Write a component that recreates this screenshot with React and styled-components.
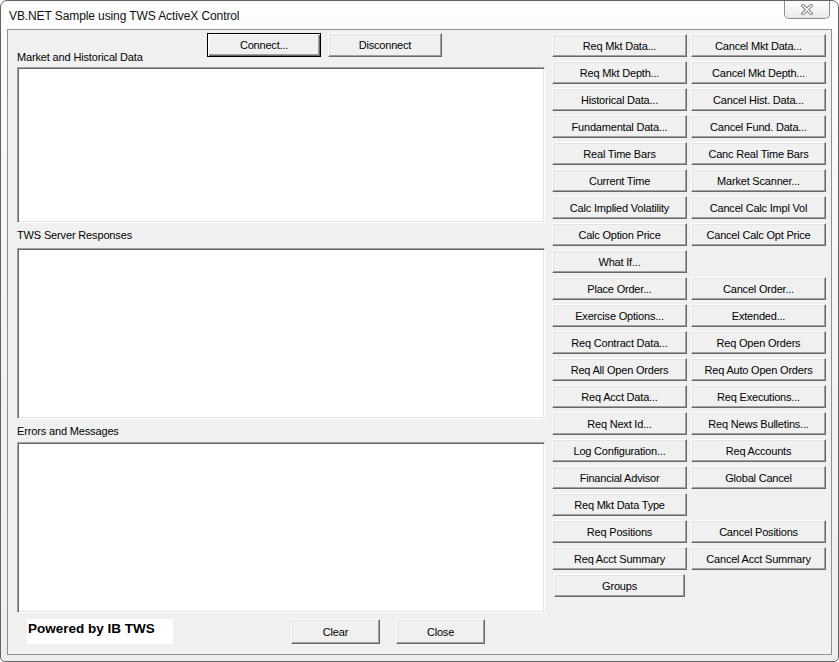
import React from "react";
import styled, { createGlobalStyle, css } from "styled-components";

const GlobalStyle = createGlobalStyle`
  html, body {
    margin: 0;
    padding: 0;
    background: #ffffff;
  }
  * {
    box-sizing: border-box;
  }
`;

const Window = styled.div`
  width: 839px;
  height: 662px;
  display: flex;
  flex-direction: column;
  border: 1px solid #5f6366;
  border-radius: 7px 7px 5px 5px;
  padding: 0 6px 6px;
  background: linear-gradient(180deg, #fdfdfd 0%, #f4f5f6 40%, #eceef0 100%);
  overflow: hidden;
`;

const TitleBar = styled.div`
  height: 28px;
  display: flex;
  align-items: flex-start;
  justify-content: space-between;
`;

const Title = styled.div`
  font-family: "Liberation Sans", Arial, sans-serif;
  font-size: 12px;
  color: #111;
  padding: 8px 0 0 2px;
  letter-spacing: -0.1px;
`;

const CloseBox = styled.div`
  width: 46px;
  height: 19px;
  margin: -1px 2px 0 0;
  border: 1px solid #8a8d90;
  border-top: none;
  border-radius: 0 0 5px 5px;
  background: linear-gradient(180deg, #ffffff 0%, #f1f2f3 60%, #e6e8ea 100%);
  display: flex;
  align-items: center;
  justify-content: center;
`;

const Client = styled.div`
  flex: 1;
  display: flex;
  flex-direction: column;
  border: 1px solid #8e9194;
  background: #f0f0f0;
  padding: 3px 0 0 9px;
`;

const Main = styled.div`
  display: flex;
  align-items: flex-start;
`;

const LeftPane = styled.div`
  width: 528px;
  display: flex;
  flex-direction: column;
`;

const Header = styled.div`
  height: 34px;
  display: flex;
  align-items: flex-start;
`;

const Label = styled.div`
  font-family: "Liberation Sans", Arial, sans-serif;
  font-size: 11px;
  line-height: 12px;
  color: #000;
  letter-spacing: -0.15px;
  ${({ $header }) =>
    $header
      ? css`
          width: 190px;
          align-self: flex-end;
          padding-bottom: 4px;
        `
      : css`
          height: ${({ $h }) => $h}px;
          padding-top: ${({ $pt }) => $pt}px;
        `}
`;

const TextPanel = styled.div`
  height: ${({ $h }) => $h}px;
  background: #ffffff;
  border: 1px solid;
  border-color: #a0a0a0 #ffffff #ffffff #a0a0a0;
  box-shadow: inset 1px 1px 0 #696969, inset -1px -1px 0 #e3e3e3;
`;

const Button = styled.button`
  height: ${({ $h }) => $h || 23}px;
  width: ${({ $w }) => $w || 135}px;
  margin: 0;
  padding: 0;
  font-family: "Liberation Sans", Arial, sans-serif;
  font-size: 11px;
  color: #000;
  letter-spacing: -0.2px;
  background: #f0f0f0;
  border: 1px solid;
  border-color: #ffffff #696969 #696969 #ffffff;
  box-shadow: inset -1px -1px 0 #a0a0a0, inset 1px 1px 0 #e3e3e3;
  white-space: nowrap;
  cursor: default;
  ${({ $default }) =>
    $default &&
    css`
      border: 1px solid #000;
      box-shadow: inset 1px 1px 0 #ffffff, inset -1px -1px 0 #696969,
        inset -2px -2px 0 #a0a0a0;
    `}
`;

const ConnectGroup = styled.div`
  display: flex;
  gap: 7px;
`;

const ButtonGrid = styled.div`
  margin: 1px 0 0 7px;
  display: grid;
  grid-template-columns: 135px 135px;
  grid-auto-rows: 23px;
  column-gap: 4px;
  row-gap: 4px;
`;

const Cell = styled.div`
  display: flex;
  padding-left: ${({ $shift }) => $shift || 0}px;
`;

const Footer = styled.div`
  display: flex;
  align-items: flex-start;
  margin-top: 6px;
  padding-left: 10px;
`;

const Powered = styled.div`
  width: 146px;
  height: 25px;
  background: #ffffff;
  font-family: "Liberation Sans", Arial, sans-serif;
  font-weight: bold;
  font-size: 13.5px;
  line-height: 16px;
  padding: 2px 0 0 1px;
  color: #000;
`;

const FooterButtons = styled.div`
  display: flex;
  gap: 16px;
  margin-left: 118px;
`;

const rows = [
  ["Req Mkt Data...", "Cancel Mkt Data..."],
  ["Req Mkt Depth...", "Cancel Mkt Depth..."],
  ["Historical Data...", "Cancel Hist. Data..."],
  ["Fundamental Data...", "Cancel Fund. Data..."],
  ["Real Time Bars", "Canc Real Time Bars"],
  ["Current Time", "Market Scanner..."],
  ["Calc Implied Volatility", "Cancel Calc Impl Vol"],
  ["Calc Option Price", "Cancel Calc Opt Price"],
  ["What If...", null],
  ["Place Order...", "Cancel Order..."],
  ["Exercise Options...", "Extended..."],
  ["Req Contract Data...", "Req Open Orders"],
  ["Req All Open Orders", "Req Auto Open Orders"],
  ["Req Acct Data...", "Req Executions..."],
  ["Req Next Id...", "Req News Bulletins..."],
  ["Log Configuration...", "Req Accounts"],
  ["Financial Advisor", "Global Cancel"],
  ["Req Mkt Data Type", null],
  ["Req Positions", "Cancel Positions"],
  ["Req Acct Summary", "Cancel Acct Summary"],
  ["Groups", null],
];

function CloseGlyph() {
  return (
    <svg width="12" height="11" viewBox="0 0 12 11">
      <path d="M2 1.5 L10 9.5 M10 1.5 L2 9.5" stroke="#7d8084" strokeWidth="3.4" strokeLinecap="square" fill="none" />
      <path d="M2 1.5 L10 9.5 M10 1.5 L2 9.5" stroke="#ffffff" strokeWidth="1.4" strokeLinecap="square" fill="none" />
    </svg>
  );
}

export default function App() {
  return (
    <>
      <GlobalStyle />
      <Window>
        <TitleBar>
          <Title>VB.NET Sample using TWS ActiveX Control</Title>
          <CloseBox>
            <CloseGlyph />
          </CloseBox>
        </TitleBar>
        <Client>
          <Main>
            <LeftPane>
              <Header>
                <Label $header>Market and Historical Data</Label>
                <ConnectGroup>
                  <Button $default $h={24} $w={114}>Connect...</Button>
                  <Button $h={24} $w={114}>Disconnect</Button>
                </ConnectGroup>
              </Header>
              <TextPanel $h={156} />
              <Label $h={25} $pt={6}>TWS Server Responses</Label>
              <TextPanel $h={171} />
              <Label $h={23} $pt={6}>Errors and Messages</Label>
              <TextPanel $h={171} />
            </LeftPane>
            <ButtonGrid>
              {rows.map(([a, b], i) => (
                <React.Fragment key={i}>
                  <Cell $shift={a === "Groups" ? 2 : 0}>
                    <Button $w={a === "Groups" ? 131 : 135}>{a}</Button>
                  </Cell>
                  <Cell>{b && <Button>{b}</Button>}</Cell>
                </React.Fragment>
              ))}
            </ButtonGrid>
          </Main>
          <Footer>
            <Powered>Powered by IB TWS</Powered>
            <FooterButtons>
              <Button $w={89} $h={25}>Clear</Button>
              <Button $w={89} $h={25}>Close</Button>
            </FooterButtons>
          </Footer>
        </Client>
      </Window>
    </>
  );
}
